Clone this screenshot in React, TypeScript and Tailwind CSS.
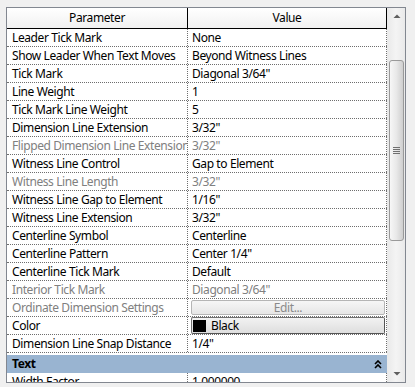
type Row = { p: string; v: string; off?: boolean; kind?: 'edit' | 'color' };

const rows: Row[] = [
  { p: 'Leader Tick Mark', v: 'None' },
  { p: 'Show Leader When Text Moves', v: 'Beyond Witness Lines' },
  { p: 'Tick Mark', v: 'Diagonal 3/64"' },
  { p: 'Line Weight', v: '1' },
  { p: 'Tick Mark Line Weight', v: '5' },
  { p: 'Dimension Line Extension', v: '3/32"' },
  { p: 'Flipped Dimension Line Extension', v: '3/32"', off: true },
  { p: 'Witness Line Control', v: 'Gap to Element' },
  { p: 'Witness Line Length', v: '3/32"', off: true },
  { p: 'Witness Line Gap to Element', v: '1/16"' },
  { p: 'Witness Line Extension', v: '3/32"' },
  { p: 'Centerline Symbol', v: 'Centerline' },
  { p: 'Centerline Pattern', v: 'Center 1/4"' },
  { p: 'Centerline Tick Mark', v: 'Default' },
  { p: 'Interior Tick Mark', v: 'Diagonal 3/64"', off: true },
  { p: 'Ordinate Dimension Settings', v: 'Edit...', off: true, kind: 'edit' },
  { p: 'Color', v: 'Black', kind: 'color' },
  { p: 'Dimension Line Snap Distance', v: '1/4"' },
];

function ValueCell({ row }: { row: Row }) {
  if (row.kind === 'edit') {
    return (
      <div className="ml-[3px] mr-[1px] my-[1px] h-[15px] rounded-[2px] border border-[#b5b5b5] bg-gradient-to-b from-[#f6f6f6] to-[#e6e6e6] text-center leading-[13px] text-[#8a8a8a]">
        {row.v}
      </div>
    );
  }
  if (row.kind === 'color') {
    return (
      <div className="ml-[3px] mr-[1px] flex h-[17px] items-center rounded-[2px] border border-[#707070] border-r-[#555] border-b-[#555] bg-gradient-to-b from-[#f2f2f2] to-[#dedede] pl-[1px]">
        <span className="h-[12px] w-[13px] bg-black" />
        <span className="ml-[5px] leading-[15px]">{row.v}</span>
      </div>
    );
  }
  return <div className="pl-[4px] leading-[17px]">{row.v}</div>;
}

function UpArrow() {
  return (
    <svg width="8" height="5" viewBox="0 0 8 5" className="block">
      <path d="M4 0.5 L7.5 4 L0.5 4 Z" fill="#5f5f5f" />
    </svg>
  );
}

function DownArrow() {
  return (
    <svg width="8" height="5" viewBox="0 0 8 5" className="block">
      <path d="M0.5 1 L7.5 1 L4 4.5 Z" fill="#5f5f5f" />
    </svg>
  );
}

function Collapse() {
  return (
    <svg width="8" height="9" viewBox="0 0 8 9" className="block">
      <path d="M1 4 L4 1 L7 4 M1 8 L4 5 L7 8" stroke="#000" strokeWidth="1.6" fill="none" />
    </svg>
  );
}

export default function App() {
  return (
    <div className="h-[387px] w-[415px] overflow-hidden bg-[#f0f0f0] pl-[6px] pt-[7px] font-['Noto_Sans','DejaVu_Sans',sans-serif] text-[12px] tracking-[-0.4px] text-black">
      <div className="flex h-[376px] w-[400px] overflow-hidden border border-[#828790] bg-white">
        <div className="w-[380px] shrink-0">
          {/* header */}
          <div className="flex h-[21px] border-b border-black bg-gradient-to-b from-white to-[#f1f1f1]">
            <div className="w-[181px] border-r border-black text-center leading-[20px]">Parameter</div>
            <div className="w-[199px] border-r border-black text-center leading-[20px]">Value</div>
          </div>

          {rows.map((r) => (
            <div key={r.p} className={`flex h-[18px] border-b border-dotted border-[#6e6e6e] ${r.off ? 'text-[#808080]' : ''}`}>
              <div className="w-[181px] overflow-hidden whitespace-nowrap border-r border-dotted border-[#6e6e6e] pl-[5px] leading-[17px]">
                {r.p}
              </div>
              <div className="w-[199px] overflow-hidden whitespace-nowrap border-r border-dotted border-[#6e6e6e]">
                <ValueCell row={r} />
              </div>
            </div>
          ))}

          {/* category */}
          <div className="h-[20px] pt-[2px]">
            <div className="flex h-[18px] items-center justify-between bg-[#99b4d1] pl-[5px] pr-[5px] font-bold">
              <span className="leading-[18px]">Text</span>
              <Collapse />
            </div>
          </div>

          <div className="flex h-[18px] border-b border-dotted border-[#6e6e6e]">
            <div className="w-[181px] overflow-hidden whitespace-nowrap border-r border-dotted border-[#6e6e6e] pl-[5px] leading-[17px]">
              Width Factor
            </div>
            <div className="w-[199px] border-r border-dotted border-[#6e6e6e] pl-[4px] leading-[17px]">1.000000</div>
          </div>
        </div>

        {/* scrollbar */}
        <div className="flex w-[18px] shrink-0 flex-col bg-gradient-to-r from-[#e9e9e9] via-[#f4f4f4] to-[#e9e9e9]">
          <div className="flex h-[17px] items-center justify-center pl-[1px]">
            <UpArrow />
          </div>
          <div className="mt-[35px] ml-[2px] flex h-[181px] w-[15px] items-center justify-center rounded-[3px] border border-[#9a9a9a] bg-gradient-to-r from-[#f7f7f7] via-[#e8e8e8] to-[#cfcfcf]">
            <div className="flex flex-col gap-[1px]">
              <span className="h-[1px] w-[7px] bg-[#707070]" />
              <span className="h-[1px] w-[7px] bg-[#707070]" />
              <span className="h-[1px] w-[7px] bg-[#707070]" />
              <span className="h-[1px] w-[7px] bg-[#707070]" />
            </div>
          </div>
          <div className="flex-1" />
          <div className="flex h-[17px] items-center justify-center pl-[1px]">
            <DownArrow />
          </div>
        </div>
      </div>
    </div>
  );
}
